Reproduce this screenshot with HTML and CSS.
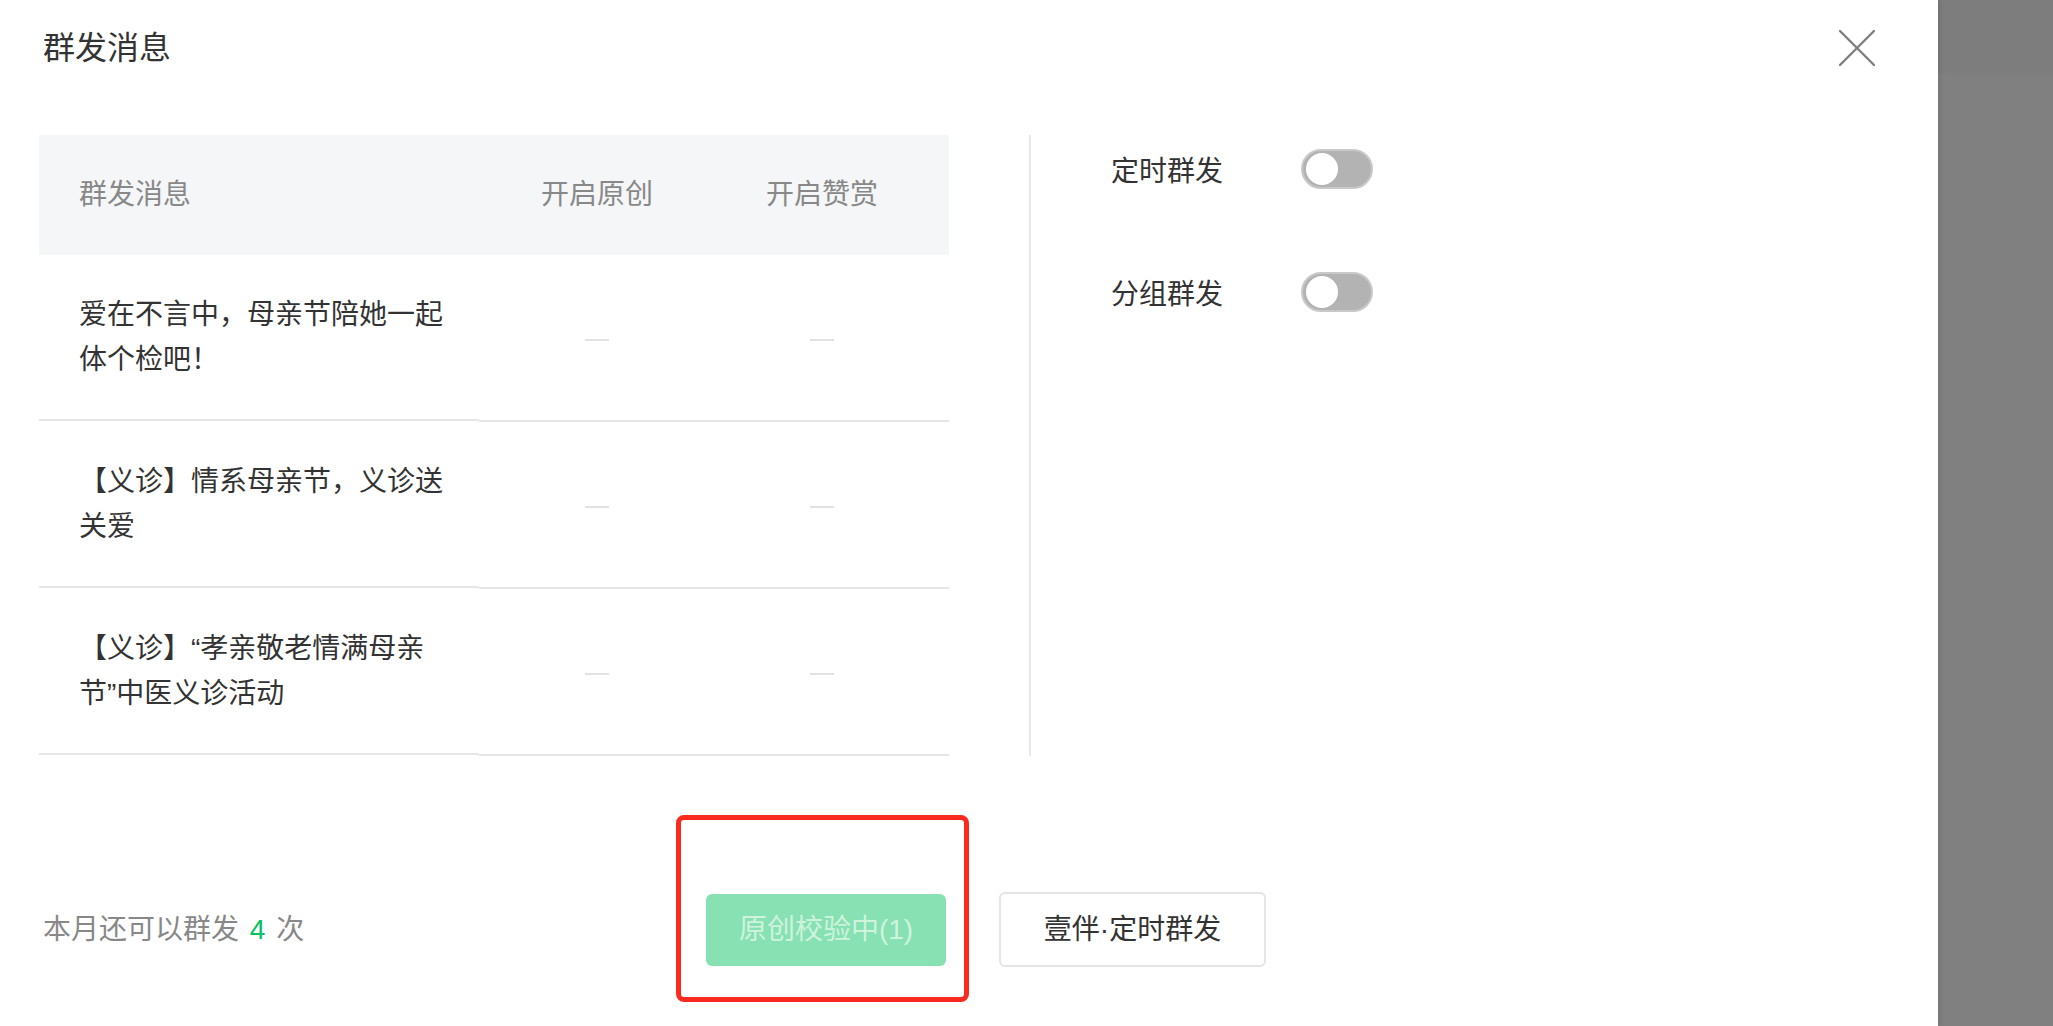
FILE: index.html
```html
<!DOCTYPE html>
<html lang="zh-CN">
<head>
<meta charset="utf-8">
<title>群发消息</title>
<link rel="stylesheet" href="styles.css">
</head>
<body>
<div class="page">
  <div class="dialog">
    <div class="dialog-head">
      <h1 class="dialog-title">群发消息</h1>
      <svg class="close-icon" width="36" height="36" viewBox="0 0 36 36" aria-label="关闭">
        <line x1="1" y1="1" x2="35" y2="35" stroke="#808080" stroke-width="2.4" stroke-linecap="round"/>
        <line x1="35" y1="1" x2="1" y2="35" stroke="#808080" stroke-width="2.4" stroke-linecap="round"/>
      </svg>
    </div>

    <div class="dialog-body">
      <div class="msg-table">
        <div class="th th-title">群发消息</div>
        <div class="th th-mid">开启原创</div>
        <div class="th th-last">开启赞赏</div>

        <div class="td td-title">爱在不言中，母亲节陪她一起体个检吧！</div>
        <div class="td td-mid"><span class="dash"></span></div>
        <div class="td td-last"><span class="dash"></span></div>

        <div class="td td-title">【义诊】情系母亲节，义诊送关爱</div>
        <div class="td td-mid"><span class="dash"></span></div>
        <div class="td td-last"><span class="dash"></span></div>

        <div class="td td-title">【义诊】“孝亲敬老情满母亲节”中医义诊活动</div>
        <div class="td td-mid"><span class="dash"></span></div>
        <div class="td td-last"><span class="dash"></span></div>
      </div>

      <div class="divider"></div>

      <div class="options">
        <div class="option">
          <span class="option-label">定时群发</span>
          <span class="switch"><span class="knob"></span></span>
        </div>
        <div class="option">
          <span class="option-label">分组群发</span>
          <span class="switch"><span class="knob"></span></span>
        </div>
      </div>
    </div>

    <div class="dialog-foot">
      <div class="quota">本月还可以群发 <span class="quota-num">4</span> 次</div>
      <div class="actions">
        <div class="mark-wrap">
          <button class="btn btn-primary" disabled>原创校验中(1)</button>
          <span class="mark"></span>
        </div>
        <button class="btn btn-default">壹伴·定时群发</button>
      </div>
    </div>
  </div>
  <div class="backdrop"></div>
</div>
</body>
</html>
```

FILE: styles.css
```css
html, body {
  margin: 0;
  padding: 0;
}

body {
  font-family: "Liberation Sans", "Noto Sans CJK SC", sans-serif;
  color: #333;
  background: #808080;
}

.page {
  display: flex;
  height: 100vh;
  overflow: hidden;
}

.dialog {
  width: 1938px;
  flex-shrink: 0;
  background: #fff;
  box-shadow: 2px 0 5px rgba(0, 0, 0, 0.1);
  position: relative;
  z-index: 1;
}

.backdrop {
  flex: 1;
  background: linear-gradient(#7d7d7d 0, #7d7d7d 73px, #808080 73px, #808080 100%);
}

/* header */
.dialog-head {
  height: 96px;
  display: flex;
  align-items: center;
  justify-content: space-between;
  padding: 0 63px 0 43px;
}

.dialog-title {
  margin: 0;
  font-size: 32px;
  font-weight: normal;
  line-height: 40px;
  color: #333;
}

.close-icon {
  display: block;
}

/* body */
.dialog-body {
  display: flex;
  margin-top: 39px;
  padding-left: 39px;
}

.msg-table {
  display: grid;
  grid-template-columns: 440px 236px 234px;
  grid-auto-rows: 167px;
  grid-template-rows: 120px;
  width: 910px;
}

.th {
  background: #f5f6f8;
  font-size: 28px;
  color: #888;
  display: flex;
  align-items: center;
  line-height: 40px;
}

.th-title {
  padding-left: 40px;
}

.th-mid {
  justify-content: center;
}

.th-last {
  justify-content: center;
  padding-right: 20px;
}

.td {
  border-bottom: 2px solid #e6e6e6;
  display: flex;
  align-items: center;
  font-size: 28px;
  line-height: 45px;
  color: #333;
}

.td-title {
  padding: 0 30px 0 40px;
  margin-bottom: 1px;
}

.td-mid {
  justify-content: center;
}

.td-last {
  justify-content: center;
  padding-right: 20px;
}

.dash {
  display: block;
  width: 24px;
  height: 2px;
  background: #e2e2e2;
  margin-top: 4px;
}

.divider {
  width: 2px;
  background: #e8e8e8;
  margin-left: 80px;
}

.options {
  padding: 14px 0 0 80px;
  display: flex;
  flex-direction: column;
  gap: 83px;
}

.option {
  display: flex;
  align-items: center;
  height: 40px;
}

.option-label {
  font-size: 28px;
  line-height: 40px;
  width: 112px;
  margin-top: 5px;
  color: #333;
}

.switch {
  margin-left: 78px;
  width: 72px;
  height: 40px;
  box-sizing: border-box;
  border-radius: 20px;
  background: #b3b3b3;
  border: 2px solid #c9c9c9;
  display: flex;
  align-items: center;
  padding-left: 3px;
}

.knob {
  width: 32px;
  height: 32px;
  border-radius: 50%;
  background: #fff;
}

/* footer */
.dialog-foot {
  display: flex;
  align-items: center;
  margin-top: 136px;
  padding-left: 43px;
  height: 75px;
}

.quota {
  width: 663px;
  flex-shrink: 0;
  font-size: 28px;
  line-height: 40px;
  color: #888;
}

.quota-num {
  color: #07c160;
  margin: 0 3px;
}

.actions {
  display: flex;
  align-items: center;
  gap: 53px;
}

.mark-wrap {
  position: relative;
  display: flex;
}

.btn {
  font-family: inherit;
  font-size: 28px;
  line-height: 40px;
  border-radius: 6px;
  margin: 0;
  box-sizing: border-box;
}

.btn-primary {
  width: 240px;
  height: 72px;
  border: none;
  background: #87e1b2;
  color: #cff3df;
}

.btn-default {
  width: 267px;
  height: 75px;
  background: #fff;
  border: 2px solid #e4e4e9;
  color: #333;
}

.mark {
  position: absolute;
  top: -79px;
  left: -30px;
  right: -23px;
  bottom: -36px;
  border: 5px solid #fa2a1e;
  border-radius: 8px;
  pointer-events: none;
}
```
